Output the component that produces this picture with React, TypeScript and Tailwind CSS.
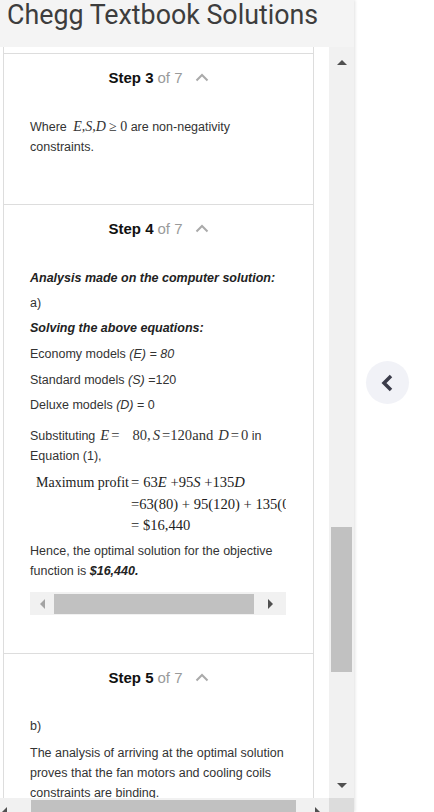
import React from 'react'

const serif = "font-['Liberation_Serif','Times_New_Roman',serif] text-[14px]"
const mathFont = "font-['Liberation_Serif','Times_New_Roman',serif] text-[14.6px]"

function StepHeader({ n }: { n: number }) {
    return (
        <div className="flex h-[33px] items-start justify-center pt-[15px]">
            <span className="text-[15px] leading-[18px] font-bold text-[#111]">Step {n}</span>
            <span className="ml-[4px] text-[15px] leading-[18px] text-[#9a9a9a]">of 7</span>
            <svg width="14" height="9" viewBox="0 0 14 9" className="ml-[12px] mt-[4px]">
                <path d="M1.5 7.5 L7 2 L12.5 7.5" fill="none" stroke="#aaaaaa" strokeWidth="2" />
            </svg>
        </div>
    )
}

interface StepProps {
    n: number;
    bodyClass: string;
    children: React.ReactNode;
}

function Step({ n, bodyClass, children }: StepProps) {
    return (
        <section className="border-t border-[#dddddd]">
            <StepHeader n={n} />
            <div className={"pl-[26px] text-[12.5px] leading-[20px] text-[#333] " + bodyClass}>{children}</div>
        </section>
    )
}

function InnerScrollbar() {
    return (
        <div className="flex h-[23px] w-[256px] items-center bg-[#f1f1f1]">
            {/* left, disabled */}
            <div className="flex h-full w-[24px] items-center justify-center">
                <div className="h-0 w-0 border-y-[5px] border-r-[5px] border-y-transparent border-r-[#a3a3a3]" />
            </div>
            <div className="h-[20px] w-[200px] bg-[#c1c1c1]" />
            <div className="flex h-full flex-1 items-center justify-center">
                <div className="h-0 w-0 border-y-[5px] border-l-[5px] border-y-transparent border-l-[#505050]" />
            </div>
        </div>
    )
}

function VScroll() {
    return (
        <div className="flex w-[25px] shrink-0 flex-col bg-[#f1f1f1]">
            <div className="flex h-[30px] items-center justify-center">
                <div className="h-0 w-0 border-x-[5px] border-b-[5px] border-x-transparent border-b-[#505050]" />
            </div>
            <div className="flex-1 px-[2px] pt-[450px]">
                <div className="h-[145px] bg-[#c1c1c1]" />
            </div>
            <div className="flex h-[26px] items-center justify-center">
                <div className="h-0 w-0 border-x-[5px] border-t-[5px] border-x-transparent border-t-[#505050]" />
            </div>
        </div>
    )
}

function HScroll() {
    return (
        <div className="flex h-[14px] shrink-0">
            <div className="flex w-[329px] bg-[#f1f1f1]">
                <div className="w-[31px] pl-[2px] pt-[9px]">
                    <div className="h-0 w-0 border-y-[5px] border-r-[5px] border-y-transparent border-r-[#505050]" />
                </div>
                <div className="mt-[2px] w-[265px] bg-[#c1c1c1]" />
                <div className="flex-1 pl-[19px] pt-[9px]">
                    <div className="h-0 w-0 border-y-[5px] border-l-[5px] border-y-transparent border-l-[#505050]" />
                </div>
            </div>
            <div className="flex-1 bg-[#dcdcdc]" />
        </div>
    )
}

export default function App() {
    return (
        <div className="flex h-[812px] w-[434px] overflow-hidden bg-white font-['Liberation_Sans',Arial,sans-serif]">
            <div className="relative z-10 flex w-[354px] shrink-0 flex-col bg-white shadow-[1px_0_3px_rgba(0,0,0,0.12)]">
                {/* Titre */}
                <div className="h-[47px] shrink-0 bg-[#f4f4f4] pl-[7px] pt-[1px] font-['Roboto',sans-serif] text-[26.8px] leading-[28px] text-[#3d3d3d]">
                    Chegg Textbook Solutions
                </div>

                <div className="flex min-h-0 flex-1">
                    <div className="w-[329px] shrink-0 overflow-hidden">
                        <div className="ml-[3px] w-[311px] border-x border-[#dddddd] pt-[6px]">
                            {/* Step 3 */}
                            <Step n={3} bodyClass="pt-[30px] pb-[47px]">
                                <p>
                                    Where <span className={serif + " mx-[3px] italic"}>E,S,D</span>
                                    <span className={serif}>≥ 0</span> are non-negativity
                                    <br />
                                    constraints.
                                </p>
                            </Step>

                            {/* Step 4 */}
                            <Step n={4} bodyClass="pt-[30px] pb-[38px]">
                                <p className="mb-[5px] font-bold italic text-[#222]">Analysis made on the computer solution:</p>
                                <p className="mb-[5px]">a)</p>
                                <p className="mb-[6px] font-bold italic text-[#222]">Solving the above equations:</p>
                                <p className="mb-[6px]">Economy models <i>(E) = 80</i></p>
                                <p className="mb-[5px]">Standard models <i>(S)</i> =120</p>
                                <p className="mb-[10px]">Deluxe models <i>(D)</i> = 0</p>
                                <p className="whitespace-nowrap">
                                    Substituting
                                    <span className={mathFont + " ml-[5px]"}>
                                        <i>E</i>
                                        <span className="ml-[2px]">=</span>
                                        <span className="ml-[13px]">80,</span>
                                        <i className="ml-[2px]">S</i>
                                        <span className="ml-[2px]">=</span>
                                        120and
                                        <i className="ml-[5px]">D</i>
                                        <span className="ml-[2px]">=</span>
                                        <span className="ml-[2px]">0</span>
                                    </span>{' '}
                                    in
                                    <br />
                                    Equation (1),
                                </p>

                                {/* Maximum profit */}
                                <div className={mathFont + " mt-[6px] w-[256px] overflow-hidden whitespace-nowrap leading-[21.5px] text-[#222]"}>
                                    <div className="flex pl-[6px]">
                                        <span className="w-[95px] shrink-0 text-[14px]">Maximum profit</span>
                                        <span>=</span>
                                        <span className="ml-[4px]">63<i>E</i> +95<i>S</i> +135<i>D</i></span>
                                    </div>
                                    <div className="pl-[101px]">=63(80) + 95(120) + 135(0) = 16,440</div>
                                    <div className="pl-[101px]">= $16,440</div>
                                </div>

                                <p className="mt-[4px]">
                                    Hence, the optimal solution for the objective
                                    <br />
                                    function is <b className="italic text-[#222]">$16,440.</b>
                                </p>

                                <div className="mt-[11.5px]">
                                    <InnerScrollbar />
                                </div>
                            </Step>

                            {/* Step 5 */}
                            <Step n={5} bodyClass="pt-[29px] pb-[40px]">
                                <p className="mb-[7px]">b)</p>
                                <p>
                                    The analysis of arriving at the optimal solution
                                    <br />
                                    proves that the fan motors and cooling coils
                                    <br />
                                    constraints are binding.
                                </p>
                            </Step>
                        </div>
                    </div>
                    <VScroll />
                </div>
                <HScroll />
            </div>

            {/* Bouton retour */}
            <div className="flex-1 pl-[12px] pt-[361px]">
                <button className="flex h-[43px] w-[43px] items-center justify-center rounded-full bg-[#f1f2f7]">
                    <svg width="14" height="20" viewBox="0 0 14 20" className="mr-[2px]">
                        <path d="M11 3 L4 10 L11 17" fill="none" stroke="#3b3c4a" strokeWidth="3.5" />
                    </svg>
                </button>
            </div>
        </div>
    )
}
